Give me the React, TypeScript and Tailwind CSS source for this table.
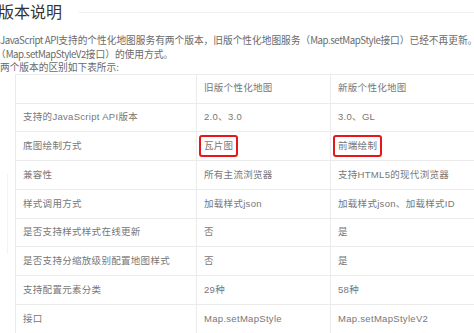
import React from 'react';

const rows: [string, React.ReactNode, React.ReactNode][] = [
  ['支持的JavaScript API版本', '2.0、3.0', '3.0、GL'],
  [
    '底图绘制方式',
    <span className="inline-block rounded-[3px] border-2 border-[#e8161b] px-[3px] py-[2px] -ml-[5px]">瓦片图</span>,
    <span className="inline-block rounded-[3px] border-2 border-[#e8161b] px-[3px] py-[2px] -ml-[5px]">前端绘制</span>,
  ],
  ['兼容性', '所有主流浏览器', '支持HTML5的现代浏览器'],
  ['样式调用方式', '加载样式json', '加载样式json、加载样式ID'],
  ['是否支持样式样式在线更新', '否', '是'],
  ['是否支持分缩放级别配置地图样式', '否', '是'],
  ['支持配置元素分类', '29种', '58种'],
  ['接口', 'Map.setMapStyle', 'Map.setMapStyleV2'],
];

const Latin = ({ children }: { children: React.ReactNode }) => (
  <span className="tracking-[-0.45px]">{children}</span>
);

const App: React.FC = () => {
  return (
    <div
      className="w-[474px] h-[333px] overflow-hidden bg-white text-[#666]"
      style={{ fontFamily: '"Liberation Sans", "Noto Sans CJK SC", sans-serif' }}
    >
      {/* Heading */}
      <div className="flex items-center h-[25px] -ml-[2px]">
        <h2 className="text-[16px] leading-[25px] text-[#333] font-normal whitespace-nowrap">版本说明</h2>
        <div className="flex-1 ml-[16px] h-px bg-[#f2f2f2]"></div>
      </div>

      {/* Intro text */}
      <div
        className="mt-[9px] text-[9.7px] leading-[13.5px] whitespace-nowrap text-[#6a6a6a]"
        style={{ fontFamily: '"Noto Sans CJK SC", sans-serif' }}
      >
        <p>
          <Latin>JavaScript API</Latin>支持的个性化地图服务有两个版本，旧版个性化地图服务（<Latin>Map.setMapStyle</Latin>接口）已经不再更新。若
        </p>
        <p className="-ml-[4px]">
          （<Latin>Map.setMapStyleV2</Latin>接口）的使用方式。
        </p>
        <p>两个版本的区别如下表所示:</p>
      </div>

      {/* Comparison table */}
      <div className="flex -mt-[1px]">
        <div className="shrink-0 w-[8px] border-r border-[#f4f4f4] mr-[7px] mt-[100px] h-[80px]"></div>
        <table className="table-fixed w-[465px] shrink-0 border-collapse text-[9.5px] tracking-[0.3px] text-[#777]">
          <colgroup>
            <col className="w-[181px]" />
            <col className="w-[134px]" />
            <col className="w-[150px]" />
          </colgroup>
          <thead>
            <tr className="h-[29px]">
              <th className="border border-[#ebebeb] font-normal text-left px-[7px]"></th>
              <th className="border border-[#ebebeb] font-normal text-left px-[7px]">旧版个性化地图</th>
              <th className="border border-[#ebebeb] font-normal text-left px-[7px]">新版个性化地图</th>
            </tr>
          </thead>
          <tbody>
            {rows.map(([a, b, c], i) => (
              <tr key={i} className="h-[28.75px]">
                <td className="border border-[#ebebeb] px-[7px] whitespace-nowrap">{a}</td>
                <td className="border border-[#ebebeb] px-[7px] whitespace-nowrap">{b}</td>
                <td className="border border-[#ebebeb] px-[7px] whitespace-nowrap">{c}</td>
              </tr>
            ))}
          </tbody>
        </table>
      </div>
    </div>
  );
};

export default App;
